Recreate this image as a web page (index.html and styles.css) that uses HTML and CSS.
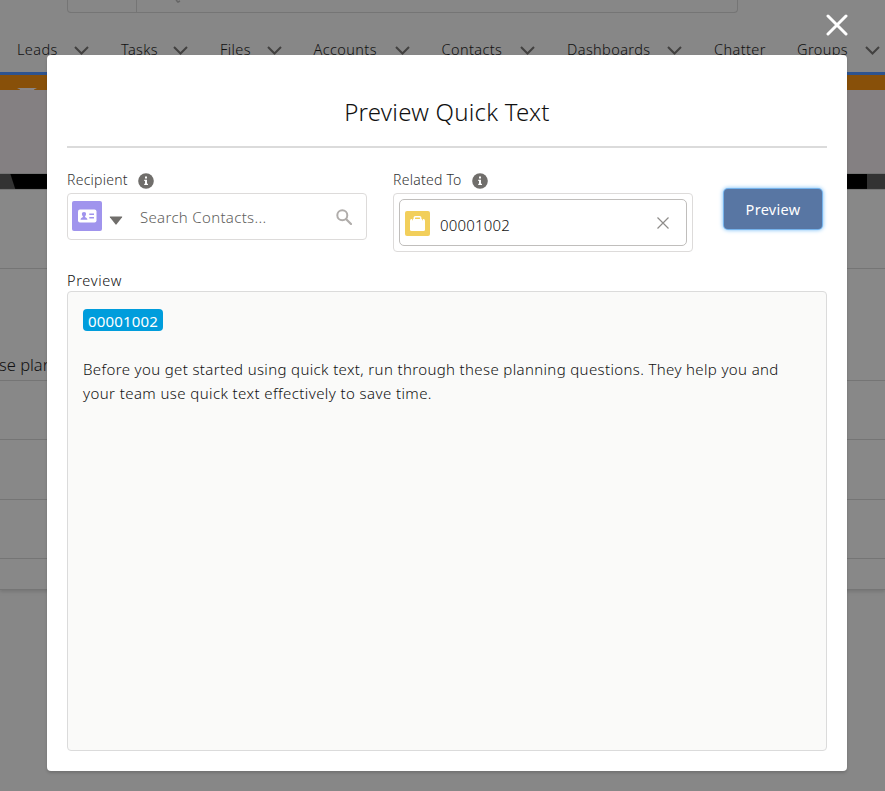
FILE: index.html
```html
<!DOCTYPE html>
<html lang="en">

<head>
  <meta charset="UTF-8">
  <meta name="viewport" content="width=device-width, initial-scale=1.0">
  <title>Preview Quick Text</title>
  <link rel="stylesheet" href="styles.css">
</head>

<body>
  <!-- page behind the modal -->
  <div class="page">
    <header class="top">
      <div class="search-bar">
        <div class="scope"></div>
        <svg class="search-tip" viewBox="0 0 6 3" width="6" height="3"><path d="M1 0l2 2 2-1" fill="none" stroke="#666" stroke-width="1.5"/></svg>
      </div>
    </header>
    <nav class="nav">
      <div class="nav-item"><span>Leads</span><svg class="chevron" viewBox="0 0 15 9"><path d="M1 1l6.5 6.5L14 1"/></svg></div>
      <div class="nav-item"><span>Tasks</span><svg class="chevron" viewBox="0 0 15 9"><path d="M1 1l6.5 6.5L14 1"/></svg></div>
      <div class="nav-item"><span>Files</span><svg class="chevron" viewBox="0 0 15 9"><path d="M1 1l6.5 6.5L14 1"/></svg></div>
      <div class="nav-item"><span>Accounts</span><svg class="chevron" viewBox="0 0 15 9"><path d="M1 1l6.5 6.5L14 1"/></svg></div>
      <div class="nav-item"><span>Contacts</span><svg class="chevron" viewBox="0 0 15 9"><path d="M1 1l6.5 6.5L14 1"/></svg></div>
      <div class="nav-item"><span>Dashboards</span><svg class="chevron" viewBox="0 0 15 9"><path d="M1 1l6.5 6.5L14 1"/></svg></div>
      <div class="nav-item"><span>Chatter</span></div>
      <div class="nav-item last"><span>Groups</span><svg class="chevron" viewBox="0 0 15 9"><path d="M1 1l6.5 6.5L14 1"/></svg></div>
    </nav>
    <div class="banner">
      <svg viewBox="0 0 20 3" width="20" height="3"><path d="M0 0h20l-3 1.5V3H3V1.5z" fill="#898687"/></svg>
    </div>
    <div class="hero"></div>
    <div class="strip"></div>
    <div class="rows">
      <div class="row head"></div>
      <div class="row text">se plan</div>
      <div class="row"></div>
      <div class="row tall"></div>
      <div class="row"></div>
      <div class="row foot"></div>
    </div>
  </div>

  <!-- modal -->
  <div class="modal">
    <button class="close" aria-label="Close">
      <svg viewBox="0 0 22 22" width="22" height="22"><path d="M2 2l18 18M20 2L2 20"/></svg>
    </button>
    <h2 class="title">Preview Quick Text</h2>
    <div class="form">
      <div class="field">
        <div class="label"><span class="recipient">Recipient</span>
          <svg class="info" viewBox="0 0 16 16"><circle cx="8" cy="8" r="7.8" fill="#706e6b"/><path d="M7 3.6h2v2H7zM6.2 6.7H9v4h1v1.4H6.2v-1.4H7V8h-.8z" fill="#fff"/></svg>
        </div>
        <div class="lookup">
          <svg class="contact" viewBox="0 0 30 30">
            <rect width="30" height="30" rx="2" fill="#a094ed"/>
            <rect x="6" y="8.5" width="18.5" height="13" rx="2" fill="#fff"/>
            <path d="M12 11c3 0 2.2 3.5 1 4.4.1 1.3 2.4 1 2.4 3.3H8.6c0-2.3 2.3-2 2.4-3.3-1.2-.9-2-4.4 1-4.4zM17.3 12.6H22V14h-4.7zM17.3 16H22v1.5h-4.7z" fill="#a094ed"/>
          </svg>
          <svg class="caret" viewBox="0 0 14 9"><path d="M1.2.5h11.6q.8 0 .3.8L7.6 8.3q-.6.7-1.2 0L.9 1.3Q.4.5 1.2.5z" fill="#706e6b"/></svg>
          <span class="placeholder">Search Contacts...</span>
          <svg class="magnifier" viewBox="0 0 16 16"><circle cx="6.3" cy="6.3" r="5" fill="none" stroke="#b0adab" stroke-width="2"/><path d="M10.2 10.2l4.8 4.8" stroke="#b0adab" stroke-width="2.2" stroke-linecap="round"/></svg>
        </div>
      </div>
      <div class="field">
        <div class="label"><span class="related">Related To</span>
          <svg class="info" viewBox="0 0 16 16"><circle cx="8" cy="8" r="7.8" fill="#706e6b"/><path d="M7 3.6h2v2H7zM6.2 6.7H9v4h1v1.4H6.2v-1.4H7V8h-.8z" fill="#fff"/></svg>
        </div>
        <div class="related-box">
          <div class="pill">
            <svg class="case" viewBox="0 0 25 25">
              <rect width="25" height="25" rx="2" fill="#f2cf5b"/>
              <path d="M9.3 8.5V6.7q0-1 1-1h4.4q1 0 1 1v1.8" fill="none" stroke="#fff" stroke-width="1.5"/>
              <rect x="5" y="8" width="15" height="12" rx="1.5" fill="#fff"/>
              <path d="M7.5 8v1.3M17.5 8v1.3" stroke="#f2cf5b" stroke-width=".8"/>
            </svg>
            <span class="record">00001002</span>
            <svg class="remove" viewBox="0 0 12 12"><path d="M.5.5l11 11M11.5.5l-11 11" stroke="#8e8c8a" stroke-width="1.2"/></svg>
          </div>
        </div>
      </div>
      <button class="btn">Preview</button>
    </div>
    <div class="preview-label">Preview</div>
    <div class="preview">
      <span class="subject">00001002</span>
      <p class="line first">Before you get started using quick text, run through these planning questions. They help you and</p>
      <p class="line second">your team use quick text effectively to save time.</p>
    </div>
  </div>
</body>

</html>
```
FILE: styles.css
```css
* {
  box-sizing: border-box;
}

body {
  margin: 0;
  height: 791px;
  overflow: hidden;
  background: #878787;
  color: #111;
  font-family: "Noto Sans", "Open Sans", sans-serif;
  font-size: 15px;
  font-weight: 350;
}

svg {
  display: block;
  flex-shrink: 0;
}

/* page */
.page {
  width: 885px;
}

.top {
  height: 27px;
  padding-left: 67px;
}

.search-bar {
  width: 671px;
  height: 13px;
  display: flex;
  border: 1px solid #757575;
  border-top: none;
  border-radius: 0 0 4px 4px;
}

.scope {
  width: 69px;
  border-right: 1px solid #757575;
}

.search-tip {
  margin-left: 38px;
}

.nav {
  height: 48px;
  padding-left: 17px;
  display: grid;
  grid-template-columns: 104px 99px 93.5px 128px 125.5px 147px 83px 83px;
  border-bottom: 3px solid #2e538e;
}

.nav-item {
  height: 44px;
  display: flex;
  align-items: center;
  justify-content: space-between;
  padding-right: 32px;
  font-size: 14.5px;
  letter-spacing: .4px;
}

.nav-item.last {
  padding-right: 0;
}

.chevron {
  width: 15px;
  height: 9px;
  margin-top: 2px;
}

.chevron path {
  fill: none;
  stroke: #424140;
  stroke-width: 2;
}

.banner {
  height: 15px;
  padding: 13px 0 0 17px;
  overflow: hidden;
  background: #885009;
}

.hero {
  height: 84px;
  background: #848082;
  border-bottom: 1px solid #757575;
}

.strip {
  height: 15px;
  background: linear-gradient(72deg, #333 14px, #000 15px);
  border-right: 18px solid #333;
}

.rows {
  height: 401px;
  background: #888;
  border-top: 1px solid #757575;
  box-shadow: 0 2px 3px #777;
}

.row {
  height: 60px;
  border-bottom: 1px solid #757575;
}

.row.head {
  height: 79px;
}

.row.text {
  width: 100%;
  height: 112px;
  padding-top: 84px;
  font-size: 16.5px;
  line-height: 24px;
  text-indent: -1px;
  overflow: hidden;
}

.row:nth-child(3),
.row:nth-child(5) {
  height: 59px;
}

.row.foot {
  height: 31px;
}

/* modal */
.modal {
  position: absolute;
  left: 47px;
  top: 55px;
  width: 800px;
  height: 716px;
  padding: 32px 20px 20px;
  background: #fff;
  border-radius: 4px;
  box-shadow: 0 2px 3px rgba(0, 0, 0, .16);
}

.close {
  position: absolute;
  right: -1px;
  top: -41px;
  padding: 0;
  border: none;
  background: none;
}

.close path {
  stroke: #fff;
  stroke-width: 3;
  stroke-linecap: round;
}

.title {
  height: 61px;
  margin: 0;
  border-bottom: 2px solid #dbdbdb;
  font-size: 24px;
  font-weight: 350;
  line-height: 50px;
  letter-spacing: .23px;
  text-align: center;
}

.form {
  height: 122px;
  padding-top: 20px;
  display: flex;
  align-items: flex-start;
}

.field {
  width: 300px;
  margin-right: 26px;
}

.label {
  height: 25px;
  display: flex;
  font-size: 14px;
  line-height: 24px;
  letter-spacing: .25px;
  color: #333;
}

.recipient {
  width: 61px;
}

.related {
  width: 69px;
}

.info {
  width: 16px;
  height: 16px;
  margin: 5px 0 0 10px;
}

.lookup {
  height: 47px;
  display: flex;
  border: 1px solid #dddbda;
  border-radius: 4px;
}

.contact {
  width: 30px;
  height: 30px;
  margin: 7px 0 0 4px;
}

.caret {
  width: 14px;
  height: 9px;
  margin: 22px 17px 0 7px;
}

.placeholder {
  width: 196px;
  line-height: 47px;
  letter-spacing: .32px;
  color: #605e5c;
}

.magnifier {
  width: 16px;
  height: 16px;
  margin-top: 15px;
}

.related-box {
  height: 59px;
  padding: 5px;
  border: 1px solid #dddbda;
  border-radius: 4px;
}

.pill {
  width: 288px;
  height: 47px;
  display: flex;
  border: 1px solid #c0bebc;
  border-radius: 5px;
}

.case {
  width: 25px;
  height: 25px;
  margin: 11px 10px 0 5px;
}

.record {
  width: 217px;
  line-height: 51px;
  letter-spacing: .2px;
}

.remove {
  width: 12px;
  height: 12px;
  margin-top: 17px;
}

.btn {
  width: 98px;
  height: 40px;
  margin: 21px 0 0 5px;
  padding: 0;
  border: none;
  border-radius: 4px;
  background: #5876a3;
  box-shadow: 0 0 0 1px #75b3ec, 0 0 4px 1px #76bcf5;
  color: #fff;
  font: 400 14.5px "Noto Sans", "Open Sans", sans-serif;
  letter-spacing: .3px;
}

.preview-label {
  height: 21px;
  font-size: 14.5px;
  line-height: 21px;
  letter-spacing: .7px;
}

.preview {
  height: 460px;
  padding: 17px 15px;
  background: #fafaf9;
  border: 1px solid #dbdbdb;
  border-radius: 4px;
}

.subject {
  display: block;
  width: 80px;
  height: 22px;
  margin-bottom: 26px;
  border-radius: 4px;
  background: #009ddc;
  color: #fff;
  font-weight: 400;
  line-height: 25px;
  letter-spacing: .2px;
  text-align: center;
}

.line {
  margin: 0;
  line-height: 24px;
  white-space: nowrap;
}

.first {
  letter-spacing: .36px;
}

.second {
  letter-spacing: .41px;
}
```
